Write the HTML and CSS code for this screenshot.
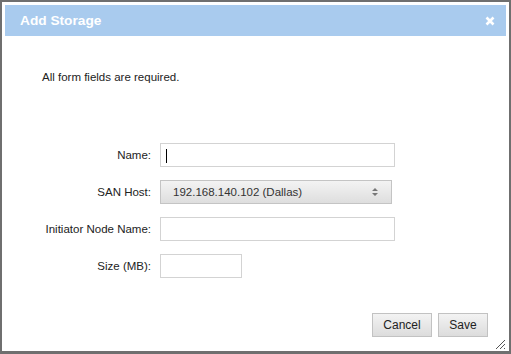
FILE: index.html
```html
<!DOCTYPE html>
<html lang="en">
<head>
  <meta charset="UTF-8">
  <title>Add Storage</title>
  <link rel="stylesheet" href="styles.css">
</head>
<body>

  <div class="dialog">
    <div class="titlebar">
      <span class="title">Add Storage</span>
      <svg class="close" width="10" height="10" viewBox="0 0 10 10">
        <path d="M1.5 1.5 L8.5 8.5 M8.5 1.5 L1.5 8.5" stroke="#fff" stroke-width="2.6"/>
      </svg>
    </div>

    <p class="note">All form fields are required.</p>

    <div class="form">
      <label>Name:</label>
      <div class="input wide"><span class="caret"></span></div>

      <label>SAN Host:</label>
      <div class="select">
        <span>192.168.140.102 (Dallas)</span>
        <svg width="6" height="8" viewBox="0 0 6 8">
          <path d="M0 3 L3 0 L6 3 Z M0 5 L3 8 L6 5 Z" fill="#777"/>
        </svg>
      </div>

      <label>Initiator Node Name:</label>
      <div class="input wide"></div>

      <label>Size (MB):</label>
      <div class="input small"></div>
    </div>

    <div class="buttons">
      <button class="btn cancel">Cancel</button>
      <button class="btn save">Save</button>
    </div>

    <svg class="grip" width="12" height="12" viewBox="0 0 12 12">
      <path d="M11 2 L2 11 M11 6 L6 11 M11 10 L10 11" stroke="#555" stroke-width="1"/>
    </svg>
  </div>

</body>
</html>
```

FILE: styles.css
```css
body {
  margin: 0;
  background-color: #6f6f6f;
  font-family: "Liberation Sans", Arial, sans-serif;
  font-size: 11.5px;
  color: #222;
}

.dialog {
  position: relative;
  box-sizing: border-box;
  margin: 2px 2px 0 2px;
  height: 349px;
  padding: 3px;
  background: #fff;
}

.titlebar {
  display: flex;
  align-items: center;
  justify-content: space-between;
  height: 31px;
  padding: 0 11px 0 15px;
  background: #a9cbee;
}

.title {
  color: #fff;
  font-weight: bold;
  font-size: 13.7px;
}

.close {
  display: block;
}

.note {
  margin: 34px 0 0 37px;
  line-height: 14px;
}

.form {
  display: grid;
  grid-template-columns: 146px auto;
  column-gap: 9px;
  row-gap: 13px;
  margin-top: 59px;
  align-items: center;
  justify-items: start;
}

.form label {
  justify-self: end;
}

.input {
  box-sizing: border-box;
  height: 24px;
  border: 1px solid #d3d3d3;
  background: #fff;
  position: relative;
}

.wide {
  width: 235px;
}

.small {
  width: 82px;
}

.caret {
  position: absolute;
  left: 5px;
  top: 5px;
  width: 1px;
  height: 14px;
  background: #000;
}

.select {
  box-sizing: border-box;
  width: 232px;
  height: 24px;
  display: flex;
  align-items: center;
  justify-content: space-between;
  padding: 0 13px 0 12px;
  border: 1px solid #c4c4c4;
  background: linear-gradient(#f3f3f3, #dedede);
  color: #333;
}

.select svg {
  display: block;
}

.buttons {
  display: flex;
  justify-content: flex-end;
  gap: 6px;
  margin: 35px 18px 0 0;
}

.btn {
  height: 24px;
  padding: 0;
  border: 1px solid #c2c2c2;
  background: linear-gradient(#f3f3f3, #dcdcdc);
  font-family: "Liberation Sans", Arial, sans-serif;
  font-size: 12px;
  color: #222;
}

.cancel {
  width: 60px;
}

.save {
  width: 50px;
}

.grip {
  position: absolute;
  right: 3px;
  bottom: 1px;
}
```
